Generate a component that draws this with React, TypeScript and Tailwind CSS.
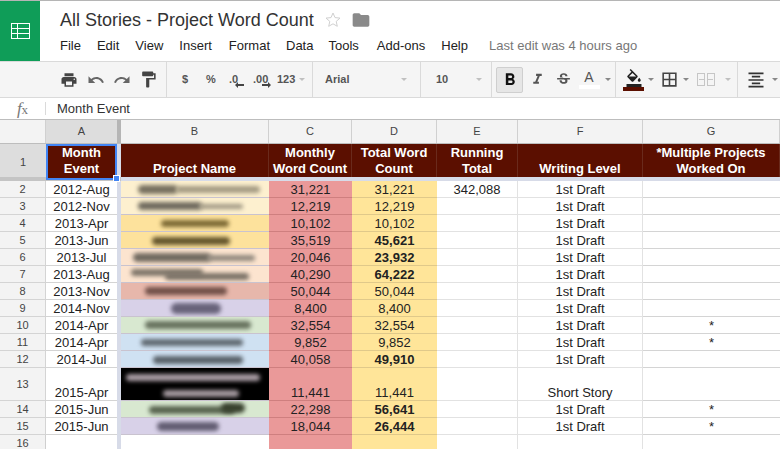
import {
  MdPrint,
  MdUndo,
  MdRedo,
  MdFormatPaint,
  MdFormatBold,
  MdFormatItalic,
  MdStrikethroughS,
  MdFormatColorFill,
  MdBorderAll,
  MdFormatAlignCenter,
  MdFolder,
} from "react-icons/md";

const COLS =
  "grid grid-cols-[46px_71px_4px_148px_83px_85px_81px_125px_1fr]";

type Smear = { left: number; width: number; top: number; height: number; color: string };

type Row = {
  n: number;
  month: string;
  words: string;
  total: string;
  bold?: boolean;
  running?: string;
  level: string;
  multi?: boolean;
  fill: string;
  smears: Smear[];
  tall?: boolean;
};

const ROWS: Row[] = [
  { n: 2, month: "2012-Aug", words: "31,221", total: "31,221", running: "342,088", level: "1st Draft", fill: "bg-[#fdf0cf]", smears: [
    { left: 17, width: 40, top: 4, height: 9, color: "#77705f" },
    { left: 55, width: 84, top: 5, height: 7, color: "#a39a82" },
  ] },
  { n: 3, month: "2012-Nov", words: "12,219", total: "12,219", level: "1st Draft", fill: "bg-[#fdf0cf]", smears: [
    { left: 17, width: 64, top: 4, height: 8, color: "#6f6a5e" },
    { left: 78, width: 44, top: 6, height: 5, color: "#a09884" },
  ] },
  { n: 4, month: "2013-Apr", words: "10,102", total: "10,102", level: "1st Draft", fill: "bg-[#fde29c]", smears: [{ left: 40, width: 68, top: 5, height: 7, color: "#7b6833" }] },
  { n: 5, month: "2013-Jun", words: "35,519", total: "45,621", bold: true, level: "1st Draft", fill: "bg-[#fde29c]", smears: [{ left: 31, width: 78, top: 5, height: 8, color: "#64552c" }] },
  { n: 6, month: "2013-Jul", words: "20,046", total: "23,932", bold: true, level: "1st Draft", fill: "bg-[#fce4cf]", smears: [
    { left: 12, width: 78, top: 4, height: 9, color: "#716a60" },
    { left: 86, width: 48, top: 6, height: 6, color: "#8f877c" },
  ] },
  { n: 7, month: "2013-Aug", words: "40,290", total: "64,222", bold: true, level: "1st Draft", fill: "bg-[#fce4cf]", smears: [
    { left: 10, width: 72, top: 3, height: 7, color: "#7d7468" },
    { left: 44, width: 84, top: 7, height: 7, color: "#7a7166" },
  ] },
  { n: 8, month: "2013-Nov", words: "50,044", total: "50,044", level: "1st Draft", fill: "bg-[#e7b7ab]", smears: [{ left: 24, width: 82, top: 4, height: 8, color: "#715048" }] },
  { n: 9, month: "2014-Nov", words: "8,400", total: "8,400", level: "1st Draft", fill: "bg-[#d8d1e8]", smears: [{ left: 50, width: 50, top: 3, height: 11, color: "#68637a" }] },
  { n: 10, month: "2014-Apr", words: "32,554", total: "32,554", level: "1st Draft", multi: true, fill: "bg-[#d8e8d0]", smears: [{ left: 24, width: 106, top: 4, height: 8, color: "#68735f" }] },
  { n: 11, month: "2014-Apr", words: "9,852", total: "9,852", level: "1st Draft", multi: true, fill: "bg-[#cfe1f2]", smears: [{ left: 20, width: 102, top: 5, height: 7, color: "#5f6870" }] },
  { n: 12, month: "2014-Jul", words: "40,058", total: "49,910", bold: true, level: "1st Draft", fill: "bg-[#cfe1f2]", smears: [{ left: 32, width: 90, top: 5, height: 8, color: "#59626a" }] },
  { n: 13, month: "2015-Apr", words: "11,441", total: "11,441", level: "Short Story", fill: "bg-black", tall: true, smears: [
    { left: 5, width: 134, top: 6, height: 7, color: "#ab9ea6" },
    { left: 42, width: 76, top: 22, height: 7, color: "#a59aa0" },
  ] },
  { n: 14, month: "2015-Jun", words: "22,298", total: "56,641", bold: true, level: "1st Draft", multi: true, fill: "bg-[#d8e8d0]", smears: [
    { left: 28, width: 86, top: 5, height: 8, color: "#58644f" },
    { left: 100, width: 24, top: 2, height: 10, color: "#39422f" },
  ] },
  { n: 15, month: "2015-Jun", words: "18,044", total: "26,444", bold: true, level: "1st Draft", multi: true, fill: "bg-[#d8d1e8]", smears: [{ left: 36, width: 62, top: 4, height: 9, color: "#625d72" }] },
];

function Caret({ light }: { light?: boolean }) {
  return (
    <span
      className={`ml-1 h-0 w-0 border-x-[3px] border-t-[3px] border-x-transparent ${
        light ? "border-t-[#c0c0c0]" : "border-t-[#888]"
      }`}
    />
  );
}

function MenuBar() {
  return (
    <div className="mt-[8px] flex items-center text-[13px] leading-[16px] text-[#222]">
      <span className="mr-[16px]">File</span>
      <span className="mr-[16px]">Edit</span>
      <span className="mr-[16px]">View</span>
      <span className="mr-[17px]">Insert</span>
      <span className="mr-[16px]">Format</span>
      <span className="mr-[15px]">Data</span>
      <span className="mr-[18px]">Tools</span>
      <span className="mr-[16px]">Add-ons</span>
      <span className="mr-[21px]">Help</span>
      <span className="text-[#777]">Last edit was 4 hours ago</span>
    </div>
  );
}

function Header() {
  return (
    <div className="flex h-[61px] border-t border-[#b5b5b5] bg-white">
      <div className="flex w-[40px] items-center justify-center bg-[#0f9d58] pb-[1px]">
        <svg width="19" height="16" viewBox="0 0 19 16" fill="none" stroke="#fff" strokeWidth="1">
          <rect x="0.5" y="0.5" width="18" height="15" />
          <path d="M0 5.5H19M0 10.5H19M6.5 0V16" />
        </svg>
      </div>
      <div className="pl-[20px]">
        <div className="flex h-[29px] items-center pt-[8px]">
          <span className="text-[18px] leading-[22px] text-[#333]">All Stories - Project Word Count</span>
          <svg className="ml-[11px]" width="16" height="15" viewBox="0 0 16 15" fill="none" stroke="#d0d0d0">
            <path d="M8 1l2 4.600 5 .5-3.800 3.300 1.100 4.900L8 11.800 3.700 14.300l1.100-4.900L1 6.100l5-.5z" />
          </svg>
          <MdFolder className="ml-[10px] text-[#8a8a8a]" size={20} />
        </div>
        <MenuBar />
      </div>
    </div>
  );
}

function Toolbar() {
  return (
    <div className="flex h-[37px] items-center border-y border-[#dadada] bg-[#f5f5f5] text-[#444]">
      <div className="flex w-[166px] items-center justify-end pr-[8px]">
        <MdPrint size={18} className="mr-[9px] text-[#444]" />
        <MdUndo size={18} className="mr-[8px] text-[#666]" />
        <MdRedo size={18} className="mr-[8px] text-[#666]" />
        <MdFormatPaint size={19} className="text-[#444]" />
      </div>
      <div className="h-[35px] w-px bg-[#dadada]" />
      <div className="flex w-[145px] items-center pl-[15px] text-[11px] font-bold text-[#555]">
        <span className="w-[24px]">$</span>
        <span className="w-[23px]">%</span>
        <span className="relative w-[24px]">
          .0
          <svg className="absolute left-[6px] top-[11px]" width="9" height="6" viewBox="0 0 9 6" fill="#444">
            <path d="M3 0v2h6v2H3v2L0 3z" />
          </svg>
        </span>
        <span className="relative w-[24px]">
          .00
          <svg className="absolute left-[9px] top-[11px]" width="9" height="6" viewBox="0 0 9 6" fill="#444">
            <path d="M6 0v2H0v2h6v2l3-3z" />
          </svg>
        </span>
        <span className="flex items-center">
          123
          <Caret light />
        </span>
      </div>
      <div className="h-[35px] w-px bg-[#dadada]" />
      <div className="flex w-[107px] items-center justify-between pl-[12px] pr-[13px] text-[11px] font-bold text-[#555]">
        Arial
        <Caret light />
      </div>
      <div className="h-[35px] w-px bg-[#dadada]" />
      <div className="flex w-[70px] items-center justify-between pl-[15px] pr-[9px] text-[11px] font-bold text-[#555]">
        10
        <Caret light />
      </div>
      <div className="h-[35px] w-px bg-[#dadada]" />
      <div className="flex w-[123px] items-center pl-[4px]">
        <div className="flex h-[26px] w-[27px] items-center justify-center rounded-[2px] border border-[#cfcfcf] bg-[#e6e6e6]">
          <MdFormatBold size={20} className="text-[#111]" />
        </div>
        <MdFormatItalic size={17} className="ml-[6px] text-[#555]" />
        <MdStrikethroughS size={17} className="ml-[9px] text-[#555]" />
        <div className="ml-[6px] flex w-[22px] flex-col items-center">
          <span className="text-[14px] leading-[15px] text-[#555]">A</span>
          <span className="h-[4px] w-[21px] bg-white" />
        </div>
        <span className="ml-[1px] flex">
          <Caret />
        </span>
      </div>
      <div className="h-[35px] w-px bg-[#dadada]" />
      <div className="flex w-[121px] items-center pl-[6px]">
        <div className="ml-[1px] flex w-[21px] flex-col items-center">
          <MdFormatColorFill size={18} className="text-[#222]" />
          <span className="h-[4px] w-[21px] bg-[#5b0f00]" />
        </div>
        <Caret />
        <MdBorderAll size={19} className="ml-[6px] text-[#444]" />
        <Caret />
        <svg className="ml-[8px]" width="18" height="13" viewBox="0 0 18 13" fill="none" stroke="#c6c6c6">
          <rect x="0.5" y="0.5" width="7" height="12" />
          <rect x="10.5" y="0.5" width="7" height="12" />
          <path d="M2 6.500H7M11 6.500H16" />
        </svg>
        <span className="ml-[6px] flex">
          <Caret light />
        </span>
      </div>
      <div className="h-[35px] w-px bg-[#dadada]" />
      <div className="flex items-center pl-[8px]">
        <MdFormatAlignCenter size={20} className="text-[#333]" />
        <span className="ml-[2px] flex">
          <Caret />
        </span>
      </div>
    </div>
  );
}

function FormulaBar() {
  return (
    <div className="flex h-[22px] items-center border-b border-[#bdbdbd] bg-white">
      <span className="flex w-[45px] items-end justify-center font-['Liberation_Serif',serif] text-[17px] italic leading-none text-[#777]">
        f<span className="text-[13px] not-italic leading-[14px]">x</span>
      </span>
      <span className="h-[13px] w-px bg-[#dadada]" />
      <span className="pl-[11px] text-[13px] text-[#333]">Month Event</span>
    </div>
  );
}

function ColumnHeaders() {
  const labels = ["B", "C", "D", "E", "F", "G"];
  return (
    <div className={`${COLS} h-[24px] border-b border-[#bdbdbd] bg-[#f3f3f3] text-[11px] leading-[23px] text-[#444]`}>
      <div className="border-r border-[#d0d0d0]" />
      <div className="bg-[#dddddd] text-center">A</div>
      <div className="bg-[#b5b5b5]" />
      {labels.map((l) => (
        <div key={l} className="border-r border-[#d0d0d0] text-center">
          {l}
        </div>
      ))}
    </div>
  );
}

function TitleCell({ children }: { children: React.ReactNode }) {
  return (
    <div className="flex items-end justify-center border-r border-[#6a2a1c] pb-[1px] text-center text-[13px] font-bold leading-[16px] text-white">
      <span className="-translate-y-[2px]">{children}</span>
    </div>
  );
}

function TitleRow() {
  return (
    <div className={`${COLS} h-[33px] bg-[#5b0f00]`}>
      <div className="flex items-center justify-center bg-[#dddddd] text-[11px] text-[#444]">1</div>
      <div className="relative flex items-end justify-center border-2 border-[#4285f4] bg-[#5b0f00] text-center text-[13px] font-bold leading-[16px] text-white">
        <span className="-translate-y-[1px]">
          Month
          <br />
          Event
        </span>
        <span className="absolute -bottom-[4px] -right-[5px] h-[7px] w-[7px] border border-white bg-[#4285f4]" />
      </div>
      <div className="bg-[#d7dbe8]" />
      <TitleCell>Project Name</TitleCell>
      <TitleCell>
        Monthly
        <br />
        Word Count
      </TitleCell>
      <TitleCell>
        Total Word
        <br />
        Count
      </TitleCell>
      <TitleCell>
        Running
        <br />
        Total
      </TitleCell>
      <TitleCell>Writing Level</TitleCell>
      <TitleCell>
        *Multiple Projects
        <br />
        Worked On
      </TitleCell>
    </div>
  );
}

function DataRow({ row }: { row: Row }) {
  const line = "border-b border-[#d4d4d4]";
  return (
    <div className={`${COLS} ${row.tall ? "h-[33px]" : "h-[17px]"} text-[13px] leading-[14px] text-[#222]`}>
      <div className={`flex items-center justify-center border-r border-[#cfcfcf] bg-[#f3f3f3] text-[11px] text-[#444] ${line}`}>
        {row.n}
      </div>
      <div className={`flex items-end justify-center ${line}`}>{row.month}</div>
      <div className="bg-[#d7dbe8]" />
      <div className={`relative overflow-hidden ${row.fill} border-b border-[#c9c3cf]`}>
        {row.smears.map((s, i) => (
          <div
            key={i}
            className="absolute rounded-full blur-[2px]"
            style={{ left: s.left, width: s.width, top: s.top, height: s.height, backgroundColor: s.color }}
          />
        ))}
      </div>
      <div className="flex items-end justify-center border-b border-[#cf7f7f] bg-[#ea9999]">{row.words}</div>
      <div className={`flex items-end justify-center border-b border-[#e0c98a] bg-[#ffe599] ${row.bold ? "font-bold" : ""}`}>
        {row.total}
      </div>
      <div className={`flex items-end justify-center border-r border-[#e2e2e2] ${line}`}>{row.running}</div>
      <div className={`flex items-end justify-center border-r border-[#e2e2e2] ${line}`}>{row.level}</div>
      <div className={`flex items-end justify-center ${line}`}>{row.multi ? "*" : ""}</div>
    </div>
  );
}

function LastRow() {
  return (
    <div className={`${COLS} h-[15px] text-[11px]`}>
      <div className="flex items-center justify-center border-r border-[#cfcfcf] bg-[#f3f3f3] text-[#444]">16</div>
      <div />
      <div className="bg-[#d7dbe8]" />
      <div />
      <div className="bg-[#ea9999]" />
      <div className="bg-[#ffe599]" />
      <div className="border-r border-[#e2e2e2]" />
      <div className="border-r border-[#e2e2e2]" />
      <div />
    </div>
  );
}

export default function App() {
  return (
    <div className="h-[449px] w-[780px] overflow-hidden bg-white font-['Liberation_Sans',Arial,sans-serif]">
      <Header />
      <Toolbar />
      <FormulaBar />
      <ColumnHeaders />
      <TitleRow />
      <div className={`${COLS} h-[4px]`}>
        <div className="bg-[#c4c4c4]" />
        <div className="bg-[#c4c4c4]" />
        <div className="bg-[#c4c4c4]" />
        <div className="col-span-6 bg-[#d7dbe8]" />
      </div>
      {ROWS.map((r) => (
        <DataRow key={r.n} row={r} />
      ))}
      <LastRow />
    </div>
  );
}
